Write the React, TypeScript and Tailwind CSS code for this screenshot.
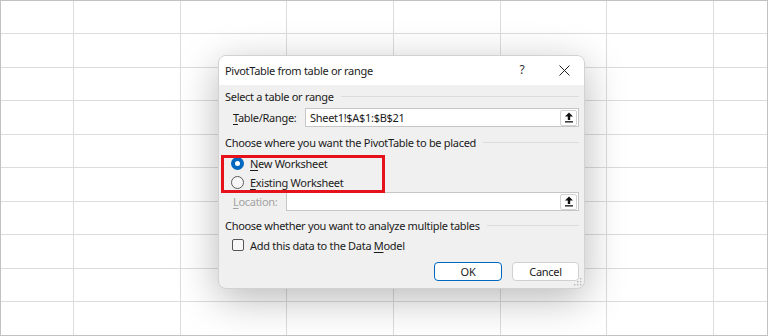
import React from 'react';

const COLS = 8;
const ROWS = 11;

const Underlined = ({ ch }: { ch: string }) => (
  <span className="underline underline-offset-[2px] decoration-[1px]">{ch}</span>
);

const SectionHeader = ({ children }: { children: React.ReactNode }) => (
  <div className="flex items-center h-[16px]">
    <span className="whitespace-nowrap">{children}</span>
    <div className="flex-1 h-px bg-[#dcdcdc] ml-[7px]" />
  </div>
);

const UploadIcon = () => (
  <svg width="10" height="11" viewBox="0 0 10 11">
    <path d="M5 0.5 L9 4.6 H6.2 V8 H3.8 V4.6 H1 Z" fill="#111" />
    <rect x="1" y="9.2" width="8" height="1.3" fill="#111" />
  </svg>
);

const RangeInput = ({ value }: { value?: string }) => (
  <div className="flex-1 h-full bg-white border border-[#c6c6c6] flex items-center">
    <span className="flex-1 pl-[4px] whitespace-nowrap">{value}</span>
    <div className="w-[17px] h-[16px] mr-px bg-white border border-[#d3d3d3] rounded-[2px] flex items-center justify-center">
      <UploadIcon />
    </div>
  </div>
);

const Radio = ({ checked }: { checked?: boolean }) =>
  checked ? (
    <div className="w-[13px] h-[13px] rounded-full bg-[#0067c0] flex items-center justify-center">
      <div className="w-[5px] h-[5px] rounded-full bg-white" />
    </div>
  ) : (
    <div className="w-[13px] h-[13px] rounded-full border border-[#5a5a5a] bg-[#f7f7f7]" />
  );

const ResizeGrip = () => (
  <svg width="9" height="9" viewBox="0 0 9 9" className="absolute right-[2px] bottom-[2px]">
    {[
      [7, 1],
      [7, 4],
      [4, 4],
      [7, 7],
      [4, 7],
      [1, 7],
    ].map(([x, y], i) => (
      <rect key={i} x={x} y={y} width="1.4" height="1.4" fill="#b5b5b5" />
    ))}
  </svg>
);

export default function App() {
  return (
    <div className="relative w-[768px] h-[336px] overflow-hidden bg-white border border-[#c2c2c2]">
      {/* sheet grid */}
      <div className="grid grid-cols-[73px_repeat(7,106.7px)] grid-rows-[33px_repeat(10,33.5px)]">
        {Array.from({ length: COLS * ROWS }).map((_, i) => (
          <div key={i} className="border-r border-b border-[#dcdcdc]" />
        ))}
      </div>

      {/* dialog */}
      <div className="absolute left-[217px] top-[54px] w-[367px] h-[234px] rounded-[8px] border border-[#d2d2d2] bg-[#f0f0f0] overflow-hidden shadow-[0_10px_40px_rgba(0,0,0,0.28)] font-['Noto_Sans','Open_Sans',sans-serif] text-[11px] tracking-[-0.3px] text-[#1b1b1b] leading-none">
        <div className="h-[29px] bg-white flex items-center pl-[6px] pr-[10px] pb-px">
          <span className="flex-1 whitespace-nowrap">PivotTable from table or range</span>
          <span className="w-[20px] text-center text-[12px] text-[#333]">?</span>
          <span className="w-[20px] ml-[22px] flex justify-center">
            <svg width="11" height="11" viewBox="0 0 11 11">
              <path d="M0.5 0.5 L10.5 10.5 M10.5 0.5 L0.5 10.5" stroke="#222" strokeWidth="1" />
            </svg>
          </span>
        </div>

        <div className="pl-[6px] pr-[5px] flex flex-col">
          <div className="mt-[3px]">
            <SectionHeader>Select a table or range</SectionHeader>
          </div>

          <div className="mt-[4px] h-[19px] flex items-center">
            <span className="w-[80px] pl-[8px] whitespace-nowrap">
              <Underlined ch="T" />able/Range:
            </span>
            <RangeInput value="Sheet1!$A$1:$B$21" />
          </div>

          <div className="mt-[7px]">
            <SectionHeader>Choose where you want the PivotTable to be placed</SectionHeader>
          </div>

          <div className="mt-[4px] h-[19px] flex items-center pl-[6px] gap-[6px]">
            <Radio checked />
            <span>
              <Underlined ch="N" />ew Worksheet
            </span>
          </div>
          <div className="h-[18px] flex items-center pl-[6px] gap-[6px]">
            <Radio />
            <span>
              <Underlined ch="E" />xisting Worksheet
            </span>
          </div>

          <div className="mt-[1px] h-[19px] flex items-center">
            <span className="w-[61px] pl-[8px] text-[#a3a3a3] whitespace-nowrap">
              <Underlined ch="L" />ocation:
            </span>
            <RangeInput />
          </div>

          <div className="mt-[6px]">
            <SectionHeader>Choose whether you want to analyze multiple tables</SectionHeader>
          </div>

          <div className="mt-[3px] h-[18px] flex items-center pl-[7px] gap-[6px]">
            <div className="w-[12px] h-[12px] rounded-[2px] border border-[#555] bg-[#f7f7f7]" />
            <span>
              Add this data to the Data <Underlined ch="M" />odel
            </span>
          </div>

          <div className="mt-[8px] flex justify-end gap-[10px]">
            <button className="w-[68px] h-[19px] rounded-[4px] bg-white border border-[#0067c0]">OK</button>
            <button className="w-[67px] h-[19px] rounded-[4px] bg-white border border-[#d0d0d0]">Cancel</button>
          </div>
        </div>

        {/* annotation box */}
        <div className="absolute left-[2px] top-[99px] w-[164px] h-[38px] border-[3px] border-[#e5121b]" />

        <ResizeGrip />
      </div>
    </div>
  );
}
